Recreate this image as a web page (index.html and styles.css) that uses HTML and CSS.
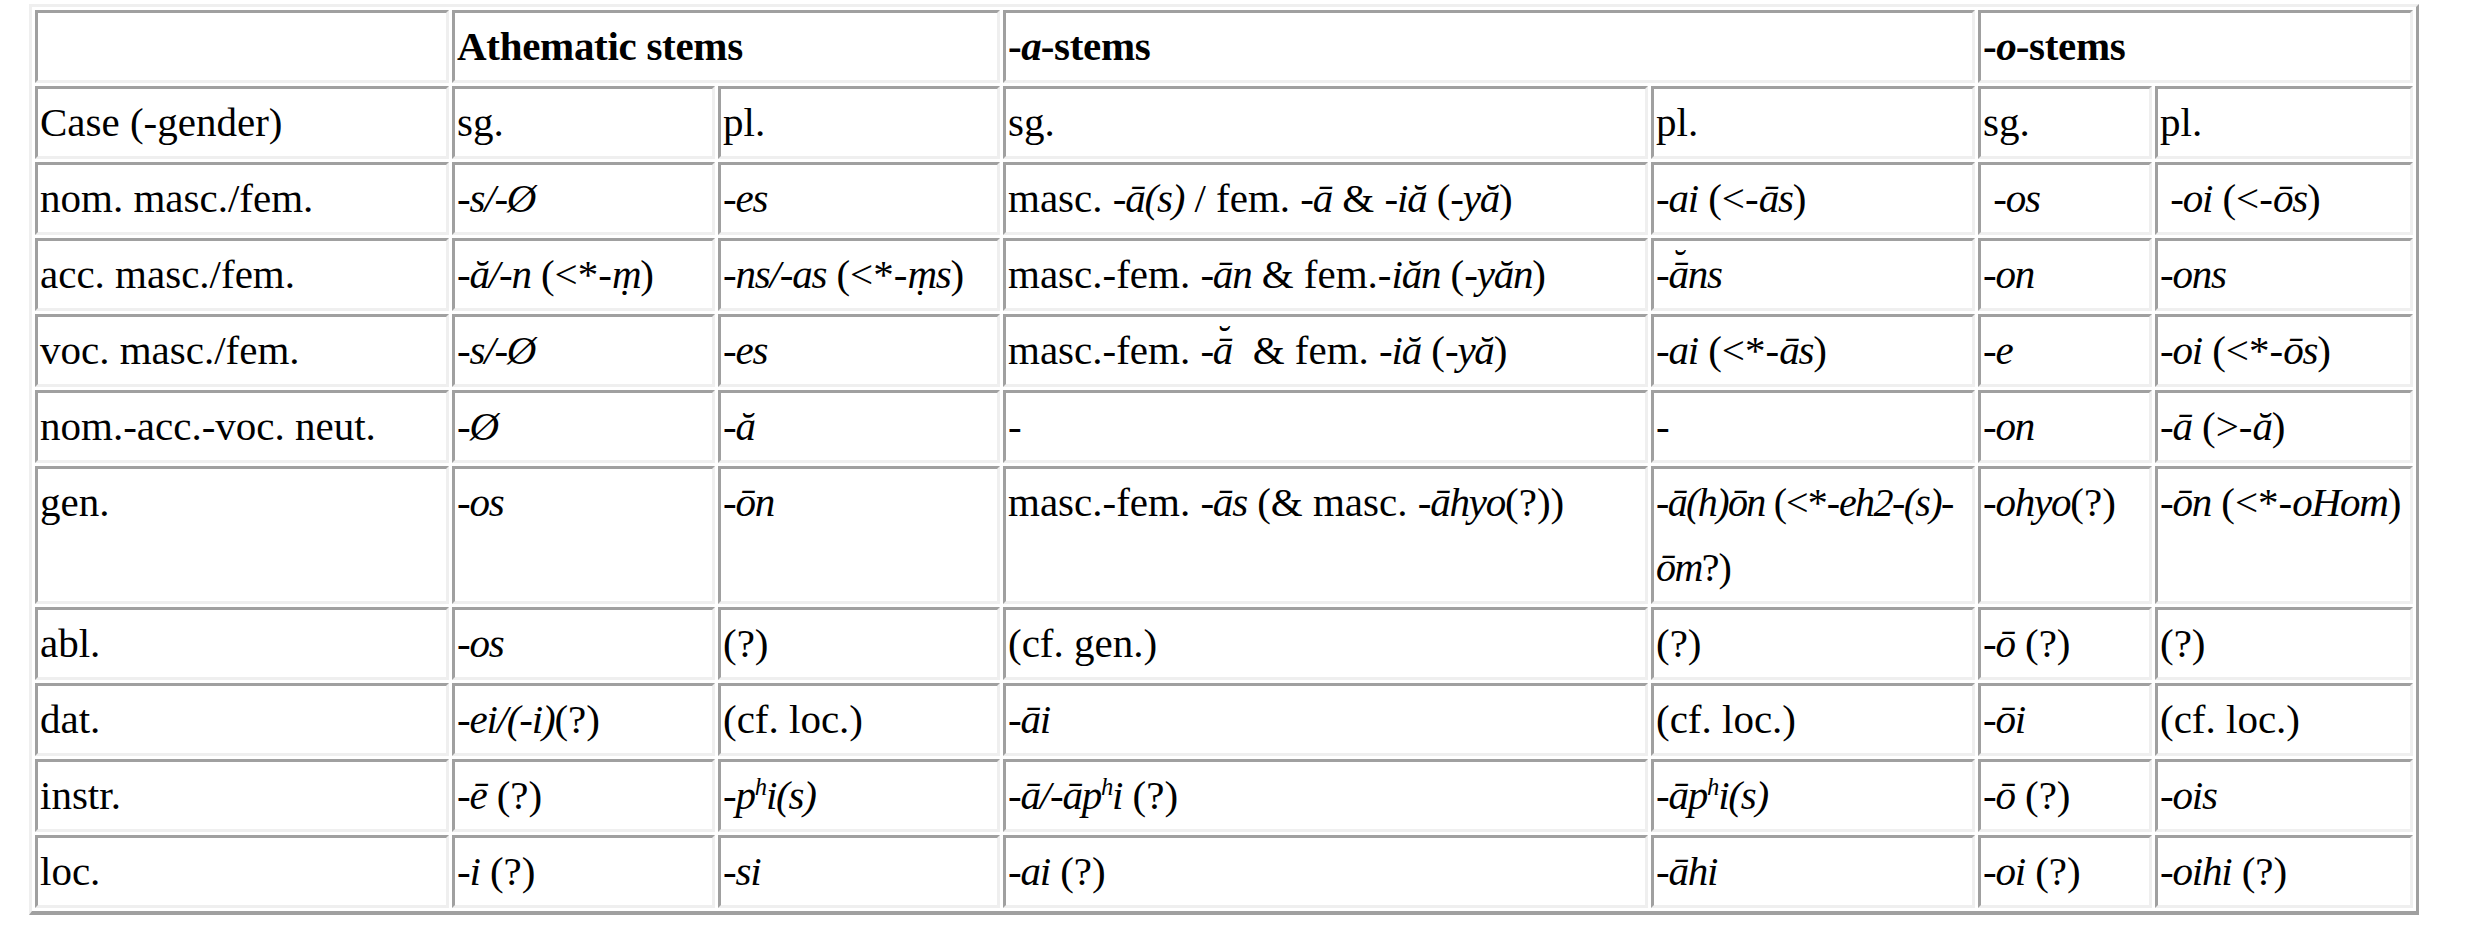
FILE: index.html
```html
<!DOCTYPE html>
<html lang="en">
<head>
<meta charset="utf-8">
<title>Declension</title>
<link rel="stylesheet" href="styles.css">
</head>
<body>
<table class="decl">
<tr>
<td class="c1"></td>
<td class="hd" colspan="2">Athematic stems</td>
<td class="hd" colspan="2">-<i>a</i>-stems</td>
<td class="hd" colspan="2">-<i>o</i>-stems</td>
</tr>
<tr>
<td class="c1">Case (-gender)</td>
<td class="c2">sg.</td>
<td class="c3">pl.</td>
<td class="c4">sg.</td>
<td class="c5">pl.</td>
<td class="c6">sg.</td>
<td class="c7">pl.</td>
</tr>
<tr>
<td>nom. masc./fem.</td>
<td><i>-s/-Ø</i></td>
<td><i>-es</i></td>
<td>masc. <i>-ā(s)</i> / fem. <i>-ā</i> &amp; <i>-iă</i> (<i>-yă</i>)</td>
<td><i>-ai</i> (&lt;-<i>ās</i>)</td>
<td>&nbsp;<i>-os</i></td>
<td>&nbsp;<i>-oi</i> (&lt;-<i>ōs</i>)</td>
</tr>
<tr>
<td>acc. masc./fem.</td>
<td><i>-ă/-n</i> (&lt;*-<i>ṃ</i>)</td>
<td><i>-ns/-as</i> (&lt;*-<i>ṃs</i>)</td>
<td>masc.-fem. <i>-ān</i> &amp; fem.-<i>iăn</i> (<i>-yăn</i>)</td>
<td><i>-<span class="combo">ā<span class="breve">˘</span></span>ns</i></td>
<td><i>-on</i></td>
<td><i>-ons</i></td>
</tr>
<tr>
<td>voc. masc./fem.</td>
<td><i>-s/-Ø</i></td>
<td><i>-es</i></td>
<td>masc.-fem. <i>-<span class="combo">ā<span class="breve">˘</span></span></i>&nbsp; &amp; fem. <i>-iă</i> (<i>-yă</i>)</td>
<td><i>-ai</i> (&lt;*-<i>ās</i>)</td>
<td><i>-e</i></td>
<td><i>-oi</i> (&lt;*-<i>ōs</i>)</td>
</tr>
<tr>
<td>nom.-acc.-voc. neut.</td>
<td><i>-Ø</i></td>
<td><i>-ă</i></td>
<td>-</td>
<td>-</td>
<td><i>-on</i></td>
<td><i>-ā</i> (&gt;-<i>ă</i>)</td>
</tr>
<tr>
<td>gen.</td>
<td><i>-os</i></td>
<td><i>-ōn</i></td>
<td>masc.-fem. <i>-ās</i> (&amp; masc. <i>-āhyo</i>(?))</td>
<td class="tight"><span class="nw"><i>-ā(h)ōn</i> (&lt;*-<i>eh2-(s)-</i></span><wbr><i>ōm</i>?)</td>
<td><i>-ohyo</i>(?)</td>
<td><i>-ōn</i> (&lt;*-<i>oHom</i>)</td>
</tr>
<tr>
<td>abl.</td>
<td><i>-os</i></td>
<td>(?)</td>
<td>(cf. gen.)</td>
<td>(?)</td>
<td><i>-ō</i> (?)</td>
<td>(?)</td>
</tr>
<tr>
<td>dat.</td>
<td><i>-ei/(-i)</i>(?)</td>
<td>(cf. loc.)</td>
<td><i>-āi</i></td>
<td>(cf. loc.)</td>
<td><i>-ōi</i></td>
<td>(cf. loc.)</td>
</tr>
<tr>
<td>instr.</td>
<td><i>-ē</i> (?)</td>
<td><i>-p<sup class="sup">h</sup>i(s)</i></td>
<td><i>-ā/-āp<sup class="sup">h</sup>i</i> (?)</td>
<td><i>-āp<sup class="sup">h</sup>i(s)</i></td>
<td><i>-ō</i> (?)</td>
<td><i>-ois</i></td>
</tr>
<tr>
<td>loc.</td>
<td><i>-i</i> (?)</td>
<td><i>-si</i></td>
<td><i>-ai</i> (?)</td>
<td><i>-āhi</i></td>
<td><i>-oi</i> (?)</td>
<td><i>-oihi</i> (?)</td>
</tr>
</table>
</body>
</html>
```
FILE: styles.css
```css
html, body {
  margin: 0;
  padding: 0;
  background: #ffffff;
}
body {
  font-family: "Liberation Serif", "Times New Roman", serif;
  font-size: 41px;
  line-height: 65px;
  color: #000000;
}
.decl {
  margin: 4px 0 0 29px;
  border-collapse: separate;
  border-spacing: 3px;
  border-style: solid;
  border-width: 3px 3px 4px 3px;
  border-color: #efefef #a0a0a0 #a0a0a0 #efefef;
}
.decl td {
  box-sizing: border-box;
  vertical-align: top;
  padding: 1px 2px;
  border-style: solid;
  border-width: 3px;
  border-color: #a0a0a0 #efefef #efefef #a0a0a0;
}
.decl i {
  letter-spacing: -1.2px;
}
.hd {
  font-weight: bold;
  letter-spacing: -0.3px;
}
.nw {
  white-space: nowrap;
}
.decl td.tight {
  font-size: 40px;
  letter-spacing: -1px;
}
.decl td.tight i {
  letter-spacing: -1.6px;
}
.c1 { width: 414px; }
.c2 { width: 263px; }
.c3 { width: 282px; }
.c4 { width: 645px; }
.c5 { width: 324px; }
.c6 { width: 174px; }
.c7 { width: 258px; }
.sup {
  font-size: 0.6em;
  line-height: 0;
  vertical-align: 0.55em;
}
.combo {
  position: relative;
  display: inline-block;
}
.breve {
  position: absolute;
  left: 0.08em;
  top: -0.3em;
  font-size: 0.9em;
}
```
